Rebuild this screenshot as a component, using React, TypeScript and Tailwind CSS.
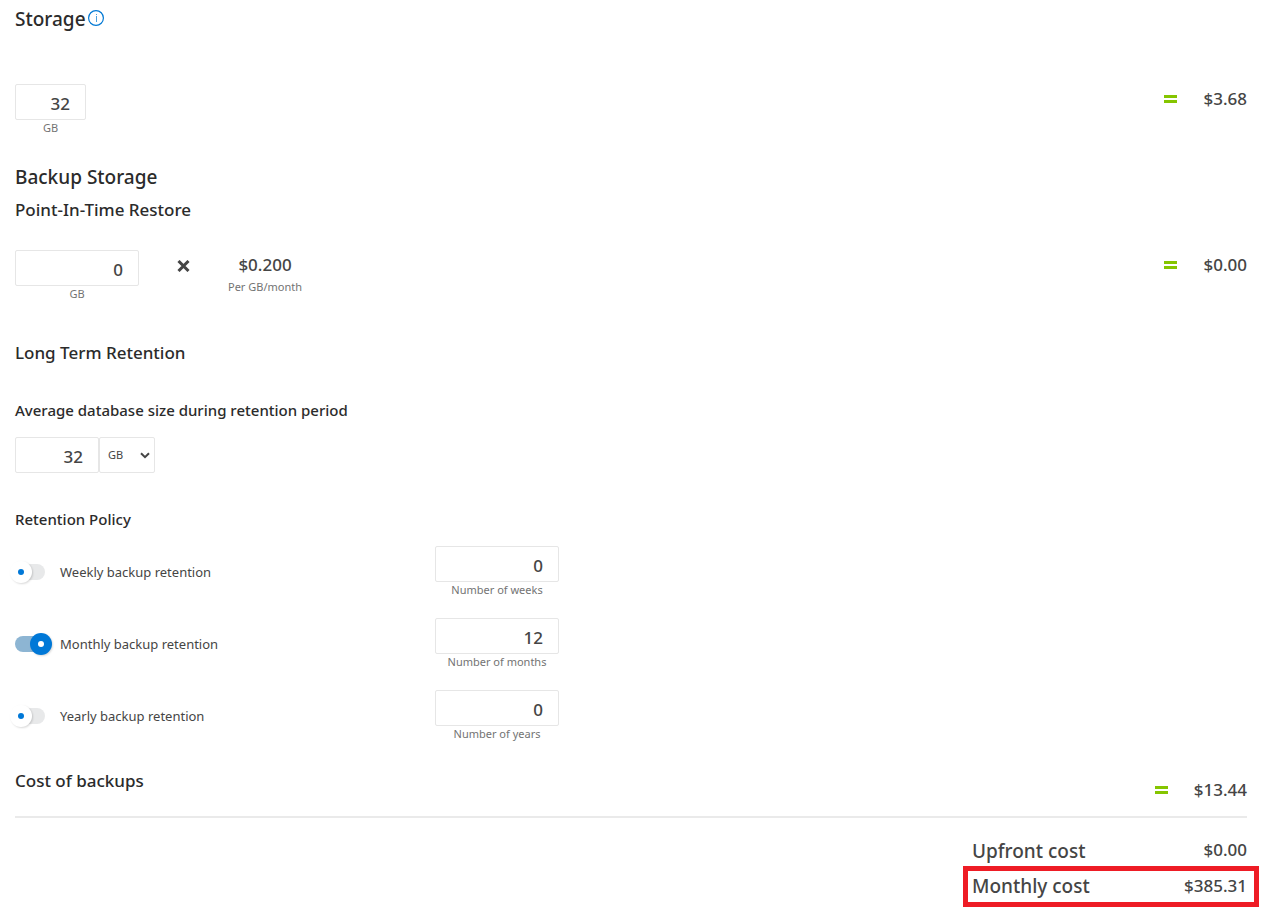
import { useState } from "react";
import { clsx } from "clsx";

type Policy = {
  id: string;
  label: string;
  unit: string;
  count: string;
  enabled: boolean;
};

const POLICIES: Policy[] = [
  { id: "weekly", label: "Weekly backup retention", unit: "Number of weeks", count: "0", enabled: false },
  { id: "monthly", label: "Monthly backup retention", unit: "Number of months", count: "12", enabled: true },
  { id: "yearly", label: "Yearly backup retention", unit: "Number of years", count: "0", enabled: false },
];

function InfoIcon() {
  return (
    <svg viewBox="0 0 16 16" className="w-4 h-4" fill="none" aria-hidden="true">
      <circle cx="8" cy="8" r="7.4" stroke="#0078d4" strokeWidth="1.2" />
      <path d="M8.5 6V12" stroke="#4ba0de" strokeWidth="1" />
      <path d="M8.5 4V5" stroke="#4ba0de" strokeWidth="1" />
    </svg>
  );
}

function EqualsIcon() {
  return (
    <svg viewBox="0 0 13 10" className="w-[13px] h-[10px]" aria-hidden="true">
      <path d="M0 1h13v3H0zM0 6h13v3H0z" fill="#85c500" />
    </svg>
  );
}

function TimesIcon() {
  return (
    <svg viewBox="0 0 13 12" className="w-[13px] h-3" aria-hidden="true">
      <path d="M1.5 1 11.5 11M11.5 1 1.5 11" stroke="#454545" strokeWidth="3" />
    </svg>
  );
}

function Price({ amount }: { amount: string }) {
  return (
    <div className="flex items-center gap-[26px] text-[17px] leading-6 font-medium">
      <EqualsIcon />
      <span>{amount}</span>
    </div>
  );
}

type NumberFieldProps = {
  id: string;
  value: string;
  caption?: string;
  label?: string;
  className?: string;
};

function NumberField({ id, value, caption, label, className }: NumberFieldProps) {
  const [current, setCurrent] = useState(value);

  return (
    <div className={clsx("flex flex-col", className)}>
      <input
        id={id}
        type="text"
        inputMode="numeric"
        aria-label={label}
        value={current}
        onChange={(e) => setCurrent(e.target.value)}
        className="w-full h-9 pt-[2px] pr-[15px] border border-[#e6e6e6] rounded-xs text-right text-[17px] font-medium outline-none focus:border-[#0078d4]"
      />
      {caption && (
        <label htmlFor={id} className="text-center text-[11px] leading-4 text-[#737373]">
          {caption}
        </label>
      )}
    </div>
  );
}

function PolicyRow({ id, label, unit, count, enabled }: Policy) {
  return (
    <div className="flex items-start">
      <div className="w-[420px] pt-4 flex items-center gap-[15px]">
        <input
          id={id}
          type="checkbox"
          role="switch"
          defaultChecked={enabled}
          className="relative appearance-none shrink-0 w-[30px] h-4 rounded-full bg-[#e8e9ea] checked:bg-[#8db5d3] before:absolute before:-top-[3px] before:-left-[5px] before:size-[22px] before:rounded-full before:bg-white before:shadow-[1px_1px_2px_rgba(0,0,0,0.15)] checked:before:left-[15px] checked:before:bg-[#0078d7] after:absolute after:top-[5px] after:left-[3px] after:size-[6px] after:rounded-full after:bg-[#0078d7] checked:after:left-[23px] checked:after:bg-white"
        />
        <label htmlFor={id} className="text-[13px] leading-5">
          {label}
        </label>
      </div>
      <NumberField id={`${id}-count`} value={count} caption={unit} className="w-[124px]" />
    </div>
  );
}

export default function App() {
  return (
    <main className="bg-white pt-[5px] pl-[15px] pr-[17px] font-['Noto_Sans',sans-serif] text-[#454545]">
      {/* STORAGE */}
      <section>
        <div className="flex items-start gap-[2px] text-[#2b2b2b]">
          <h2 className="text-[19px] leading-7 font-medium">Storage</h2>
          <button type="button" aria-label="Storage information" className="mt-[5px]">
            <InfoIcon />
          </button>
        </div>
        <div className="flex items-start mt-[51px]">
          <NumberField id="storage" value="32" caption="GB" className="w-[71px]" />
          <div className="ml-auto pt-[3px]">
            <Price amount="$3.68" />
          </div>
        </div>
      </section>

      {/* BACKUP STORAGE */}
      <section className="mt-[27px]">
        <h2 className="text-[19px] leading-7 font-medium text-[#2b2b2b]">Backup Storage</h2>
        <h3 className="mt-[7px] text-[17px] leading-6 font-medium text-[#2b2b2b]">Point-In-Time Restore</h3>
        <div className="flex items-start mt-7">
          <NumberField id="restore" value="0" caption="GB" className="w-[124px]" />
          <div className="flex items-start pt-[3px]">
            <div className="flex items-center h-[26px] px-[38px]">
              <TimesIcon />
            </div>
            <div className="text-center">
              <p className="text-[17px] leading-6 font-medium">$0.200</p>
              <p className="text-[11px] leading-5 text-[#737373]">Per GB/month</p>
            </div>
          </div>
          <div className="ml-auto pt-[3px]">
            <Price amount="$0.00" />
          </div>
        </div>
      </section>

      {/* LONG TERM RETENTION */}
      <section className="mt-[39px]">
        <h3 className="text-[17px] leading-6 font-medium text-[#2b2b2b]">Long Term Retention</h3>
        <h4 className="mt-[33px] text-[15px] leading-6 font-medium text-[#2b2b2b]">
          Average database size during retention period
        </h4>
        <div className="flex mt-[15px]">
          <NumberField id="database-size" value="32" label="Average database size" className="w-[84px]" />
          <div className="relative">
            <select
              aria-label="Size unit"
              className="appearance-none w-14 h-9 pl-2 pt-px border border-[#e6e6e6] rounded-xs bg-white text-[11px] outline-none"
            >
              <option>GB</option>
              <option>TB</option>
            </select>
            <svg
              viewBox="0 0 10 7"
              className="absolute right-[5px] top-[15px] w-[10px] h-[7px] pointer-events-none"
              fill="none"
              aria-hidden="true"
            >
              <path d="M1 1.2 5 5.2 9 1.2" stroke="#454545" strokeWidth="2" />
            </svg>
          </div>
        </div>

        <h4 className="mt-[34px] text-[15px] leading-6 font-medium text-[#2b2b2b]">Retention Policy</h4>
        <div className="flex flex-col gap-5 mt-[15px]">
          {POLICIES.map((policy) => (
            <PolicyRow key={policy.id} {...policy} />
          ))}
        </div>

        <div className="flex items-start mt-[27px] pb-[14px] border-b-2 border-[#eaeaea]">
          <h3 className="text-[17px] leading-6 font-medium text-[#2b2b2b]">Cost of backups</h3>
          <div className="ml-auto pt-[9px]">
            <Price amount="$13.44" />
          </div>
        </div>
      </section>

      {/* TOTALS */}
      <section className="w-[296px] ml-auto mt-[19px] -mr-3 font-medium">
        <div className="flex items-start justify-between pl-[9px] pr-3">
          <span className="text-[19px] leading-7">Upfront cost</span>
          <span className="text-[17px] leading-[26px]">$0.00</span>
        </div>
        <div className="flex items-start justify-between mt-px pl-1 pr-[7px] border-5 border-[#ee1c25]">
          <span className="text-[19px] leading-[31px]">Monthly cost</span>
          <span className="text-[17px] leading-[29px]">$385.31</span>
        </div>
      </section>
    </main>
  );
}
